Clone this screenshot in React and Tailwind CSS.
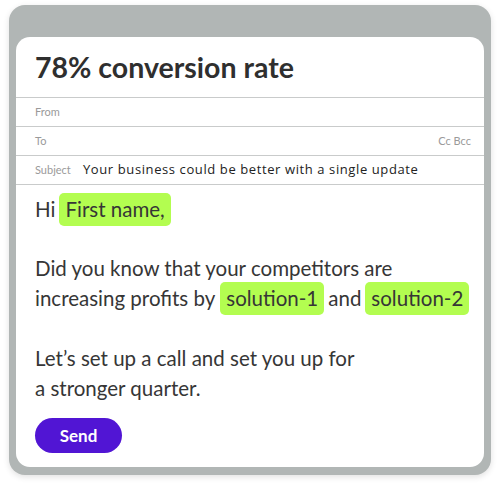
export default function App() {
  const font = { fontFamily: 'Lato, "Open Sans", sans-serif' };
  const tag = 'h-[33px] px-[6px] rounded-[5px] bg-[#b3fd50] flex items-center shrink-0';
  return (
    <div className="w-[500px] h-[488px] bg-white pt-[5px] px-[9px]" style={font}>
      <div className="h-[470px] rounded-[16px] bg-[#b1b6b5] pt-[32px] px-[7px] pb-[8px] shadow-[0_2px_6px_rgba(0,0,0,0.12)]">
        <div className="h-full rounded-[14px] bg-white overflow-hidden">
          <div className="h-[60px] flex items-center px-[19px]">
            <h1 className="text-[28.5px] font-bold text-[#2f2f2f] leading-none">78% conversion rate</h1>
          </div>
          <div className="h-[29px] border-t border-[#c9cbcb] flex items-center px-[19px] text-[11px] text-[#9a9a9a]">From</div>
          <div className="h-[29px] border-t border-[#c9cbcb] flex items-center justify-between pl-[19px] pr-[13px] text-[11px] text-[#9a9a9a]">
            <span>To</span>
            <span>Cc Bcc</span>
          </div>
          <div className="h-[29px] border-t border-[#c9cbcb] flex items-center px-[19px] text-[11px] whitespace-nowrap">
            <span className="text-[#9a9a9a] w-[48px] shrink-0">Subject</span>
            <span className="text-[#222] text-[13px] font-medium tracking-[0.6px]" style={{ fontFamily: '"Open Sans", Lato, sans-serif' }}>
              Your business could be better with a single update
            </span>
          </div>
          <div className="border-t border-[#c9cbcb] pl-[19px] pr-[6px] pt-[8px] text-[20.5px] text-[#363636] whitespace-nowrap">
            <div className="h-[33px] flex items-center">
              <span>Hi</span>
              <span className={`ml-[4px] ${tag}`}>First name,</span>
            </div>
            <div className="mt-[29px] h-[27px] flex items-center">Did you know that your competitors are</div>
            <div className="h-[33px] flex items-center">
              <span className="shrink-0">increasing profits by</span>
              <span className={`ml-[5px] ${tag}`}>solution-1</span>
              <span className="mx-[4px] shrink-0">and</span>
              <span className={tag}>solution-2</span>
            </div>
            <div className="mt-[28px] h-[30px] flex items-center">Let’s set up a call and set you up for</div>
            <div className="h-[30px] flex items-center">a stronger quarter.</div>
            <button className="mt-[15px] w-[87px] h-[35px] rounded-full bg-[#5115d4] text-white text-[17px] font-bold flex items-center justify-center">
              Send
            </button>
          </div>
        </div>
      </div>
    </div>
  );
}
